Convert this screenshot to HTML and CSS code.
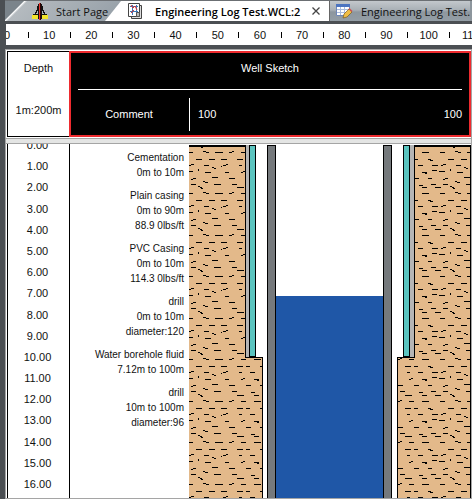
FILE: index.html
```html
<!DOCTYPE html>
<html lang="en">
<head>
  <meta charset="UTF-8" />
  <meta name="viewport" content="width=device-width, initial-scale=1.0" />
  <title>Engineering Log Test.WCL:2</title>
  <link rel="stylesheet" href="styles.css">
</head>
<body>

  <nav class="tabs" aria-label="Open documents">
    <a class="tab tab-start" href="#start">
      <svg class="icon" width="16" height="17" viewBox="0 0 16 17" shape-rendering="crispEdges" aria-hidden="true">
        <path d="M0 12h16v4H0z" fill="#f2e52c" />
        <path d="M6 1h4v15H6z" fill="#111" />
        <path d="M5 3h1v5H5zM10 3h1v5h-1zM4 7h1v3H4zM11 7h1v3h-1zM3 9h1v3H3zM12 9h1v3h-1zM1 11h5v1H1zM10 11h5v1h-5z" fill="#111" />
        <path d="M7 0h2v17H7z" fill="#e8372f" />
        <path d="M8 0h1v17H8z" fill="#300" />
      </svg>
      <span>Start Page</span>
    </a>
    <div class="tab tab-active">
      <svg class="icon" width="15" height="16" viewBox="0 0 15 16" aria-hidden="true">
        <path d="M3.500 2.500h10v13h-10z" fill="#ddd" stroke="#444" />
        <path d="M.5 .5h11v13H.5z" fill="#fff" stroke="#444" />
        <path d="M2 3.500h8M2 8.500h8M4.500 2v10M8.500 2v8" stroke="#3a77b8" fill="none" />
        <path d="M3 2l2 3 2-2 2 4M3 10l3-3" stroke="#d33" fill="none" />
        <path d="M8.500 9.500h3v4h-3z" fill="#bbb" stroke="#555" />
      </svg>
      <a href="#log">Engineering Log Test.WCL:2</a>
      <button class="close" type="button" aria-label="Close tab">
        <svg width="8" height="8" viewBox="0 0 8 8"><path d="M.5 .5l7 7M7.500 .5l-7 7" stroke="#444" stroke-width="1.3" /></svg>
      </button>
    </div>
    <a class="tab tab-next" href="#table">
      <svg class="icon" width="17" height="16" viewBox="0 0 17 16" aria-hidden="true">
        <path d="M.5 1.500h13v11H.5z" fill="#fff" stroke="#6e87b8" />
        <path d="M0 1h14v3H0z" fill="#4c74c0" />
        <path d="M1 6.500h12M1 9.500h12M4.500 4v8M8.500 4v8" stroke="#a9bbdd" />
        <path d="M7 15l1-4 5-5 3 3-5 5z" fill="#efbd45" stroke="#7b5a20" stroke-width=".7" />
        <path d="M12.500 6l1-1 3 3-1 1z" fill="#c55" />
      </svg>
      <span>Engineering Log Test.</span>
    </a>
  </nav>

  <div class="ruler">
    <span>0</span><i></i><span>10</span><i></i><span>20</span><i></i><span>30</span><i></i>
    <span>40</span><i></i><span>50</span><i></i><span>60</span><i></i><span>70</span><i></i>
    <span>80</span><i></i><span>90</span><i></i><span>100</span><i></i><span>110</span>
  </div>

  <main class="log">
    <header class="log-header">
      <div class="depth-head">
        <span>Depth</span>
        <span>1m:200m</span>
      </div>
      <div class="sketch-head">
        <h1>Well Sketch</h1>
        <div class="sketch-cols">
          <span class="comment-head">Comment</span>
          <div class="scale"><span>100</span><span>100</span></div>
        </div>
      </div>
    </header>

    <div class="log-body">
      <div class="depths">
        <span>0.00</span><span>1.00</span><span>2.00</span><span>3.00</span><span>4.00</span>
        <span>5.00</span><span>6.00</span><span>7.00</span><span>8.00</span><span>9.00</span>
        <span>10.00</span><span>11.00</span><span>12.00</span><span>13.00</span><span>14.00</span>
        <span>15.00</span><span>16.00</span>
      </div>

      <div class="comments">
        <p>Cementation<br>0m to 10m</p>
        <p>Plain casing<br>0m to 90m<br>88.9 0lbs/ft</p>
        <p>PVC Casing<br>0m to 10m<br>114.3 0lbs/ft</p>
        <p>drill<br>0m to 10m<br>diameter:120</p>
        <p>Water borehole fluid<br>7.12m to 100m</p>
        <p>drill<br>10m to 100m<br>diameter:96</p>
      </div>

      <svg class="well" width="282" height="354" viewBox="0 0 282 354" shape-rendering="crispEdges" role="img" aria-label="Well sketch">
        <defs>
          <g id="dashes" fill="none" stroke="#000">
            <path d="M9 1.500h2M11 2.500h2M12 3.500h2M48 2.500h7M65 2.500h5M78 2.500h6" />
            <path d="M0 8.500h4M14 7.500h3M17 8.500h3M26 8.500h8M40 8.500h3M43 7.500h2M52 8.500h5M65 8.500h7M83 8.500h1" />
            <path d="M7 15.500h6M20 15.500h6M32 15.500h6M48 15.500h6M57 15.500h4M71 15.500h3M73 16.500h3" />
            <path d="M0 21.500h2M2 20.500h3M15 21.500h5M23 23.500h2M25 24.500h2M32 22.500h1M34 21.500h3M37 20.500h2M50 21.500h3M61 21.500h5M75 21.500h6" />
            <path d="M9.500 25v2M0 27.500h4M16 28.500h6M36 28.500h4M52 28.500h2M54 27.500h2M65 28.500h5M68 29.500h2M75 26.500h5M82 27.500h2" />
            <path d="M2 35.500h2M4 34.500h3M23 33.500h6M40 34.500h6M57 34.500h5M71 34.500h4" />
            <path d="M14 37.500h2M16 38.500h3M2 40.500h5M25 40.500h7M43 40.500h5M62 41.500h4M74 40.500h5" />
          </g>
          <pattern id="rock" width="84" height="83" patternUnits="userSpaceOnUse">
            <rect width="84" height="83" fill="#e3b98a" />
            <use href="#dashes" />
            <use href="#dashes" y="41" />
          </pattern>
        </defs>

        <!-- formation -->
        <path d="M0 1h57v212h17v141H0z" fill="url(#rock)" />
        <path d="M225 1h57v353h-74V213h17z" fill="url(#rock)" />
        <path d="M0 2h57M225 2h57" stroke="#000" stroke-width="2" />

        <!-- cement -->
        <path d="M57 1h4v212h-4zM221 1h4v212h-4z" fill="#b5b5b5" />
        <path d="M56.500 1v212.500h17V354M225.500 1v212.500h-17V354M281.500 1v353" fill="none" stroke="#000" />

        <!-- PVC casing -->
        <path d="M60.500 1.500h6v211h-6zM214.500 1.500h6v211h-6z" fill="#5bc4bf" stroke="#000" />

        <!-- plain casing and fluid -->
        <path d="M87 152h107v202H87z" fill="#1f57a7" />
        <path d="M78.500 355V1.500h8V355M194.500 355V1.500h8V355" fill="#75797c" stroke="#000" />
      </svg>
    </div>
  </main>

</body>
</html>
```

FILE: styles.css
```css
* {
  box-sizing: border-box;
}
body {
  margin: 0;
  height: 100vh;
  display: flex;
  flex-direction: column;
  overflow: hidden;
  padding-left: 5px;
  background: #4b4f53;
  color: #111;
  font-family: "Liberation Sans", Arial, sans-serif;
  font-size: 11px;
}
a {
  color: inherit;
  text-decoration: none;
}

/* document tabs */
.tabs {
  display: flex;
  flex: none;
  height: 21px;
  overflow: hidden;
  background: #8d969d;
  border-top: 1px solid #6b6f73;
  font-family: "Open Sans", "Noto Sans", sans-serif;
  font-size: 11px;
  white-space: nowrap;
}
.tab {
  display: flex;
  align-items: center;
  flex: none;
  background: linear-gradient(#c3c8cc, #a9b0b6 45%, #8d979f 55%, #949ea6);
}
.tab-start {
  width: 116px;
  padding-left: 27px;
  gap: 8px;
  background: linear-gradient(135deg, #7b848b 13px, #fff 14px, #b4babf 16px, #949ea6);
}
.tab-active {
  width: 224px;
  margin-left: -16px;
  padding-left: 23px;
  gap: 12px;
  background: #fff;
  clip-path: polygon(16px 0, 100% 0, 100% 100%, 0 100%);
  color: #000;
  font-weight: 600;
}
.close {
  display: flex;
  margin: 0;
  padding: 0;
  border: 0;
  background: none;
}
.tab-next {
  padding-left: 6px;
  gap: 8px;
  border-left: 1px solid #666;
}

/* horizontal scale */
.ruler {
  display: flex;
  justify-content: space-between;
  align-items: center;
  flex: none;
  height: 21px;
  margin: 3px 0 4px 1px;
  padding: 0 1px;
  overflow: hidden;
  background: #fff;
}
.ruler span {
  display: flex;
  justify-content: center;
  width: 0;
}
.ruler i {
  width: 1px;
  height: 6px;
  background: #000;
}

/* log panel */
.log {
  display: flex;
  flex-direction: column;
  flex: 1;
  min-height: 0;
  border: 1px solid #a5a5a5;
  background: #fff;
}
.log-header {
  display: flex;
  flex: none;
  height: 89px;
  padding: 1px 0 1px 1px;
  border-bottom: 1px solid #a5a5a5;
}
.depth-head {
  display: flex;
  flex-direction: column;
  align-items: center;
  flex: none;
  width: 62px;
  padding-top: 8px;
  gap: 26px;
  border: 1px solid #000;
  border-right: 0;
  line-height: 16px;
}
.sketch-head {
  flex: 1;
  padding: 7px 7px 0;
  border: 2px solid #ee2b2f;
  background: #000;
  color: #fff;
}
h1 {
  margin: 0;
  padding-bottom: 13px;
  border-bottom: 1px solid #fff;
  font-size: 11px;
  font-weight: normal;
  line-height: 16px;
  text-align: center;
}
.sketch-cols {
  display: flex;
  height: 33px;
  margin-top: 8px;
  line-height: 33px;
}
.comment-head {
  width: 111px;
  padding-right: 9px;
  text-align: center;
}
.scale {
  display: flex;
  justify-content: space-between;
  flex: 1;
  padding-left: 8px;
  border-left: 1px solid #fff;
}

.log-body {
  display: flex;
  flex: 1;
  align-items: flex-start;
  min-height: 0;
  margin-top: 4px;
  padding-left: 1px;
  overflow: hidden;
  border-top: 1px solid #a5a5a5;
  box-shadow: 0 -4px #e4e5e4;
}
.depths {
  display: flex;
  flex-direction: column;
  justify-content: space-between;
  flex: none;
  width: 63px;
  height: 354px;
  padding: 1px 2px 14px 0;
  border: solid #000;
  border-width: 0 1px;
  text-align: center;
}
.depths span {
  height: 0;
  line-height: 0;
}
.comments {
  flex: 1;
  padding: 6px 5px 0 0;
  font-size: 10px;
  line-height: 15px;
  text-align: right;
}
.comments p {
  margin: 0 0 8px;
}
.well {
  flex: none;
}
```
